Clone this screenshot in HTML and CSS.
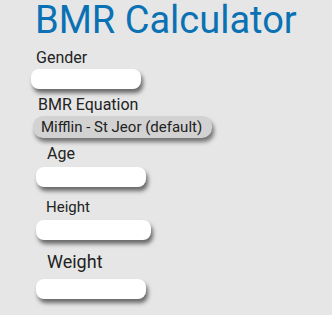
FILE: index.html
```html
<!DOCTYPE html>
<html>
<head>
<meta charset="utf-8">
<link rel="stylesheet" href="styles.css">
</head>
<body>
<div class="page">
  <h1 class="title">BMR Calculator</h1>
  <div class="field f-gender">
    <label class="lbl">Gender</label>
    <div class="box"></div>
  </div>
  <div class="field f-eq">
    <label class="lbl">BMR Equation</label>
    <div class="select">Mifflin - St Jeor (default)</div>
  </div>
  <div class="field f-age">
    <label class="lbl">Age</label>
    <div class="box"></div>
  </div>
  <div class="field f-height">
    <label class="lbl">Height</label>
    <div class="box"></div>
  </div>
  <div class="field f-weight">
    <label class="lbl">Weight</label>
    <div class="box"></div>
  </div>
</div>
</body>
</html>
```
FILE: styles.css
```css
html, body {
  margin: 0;
  padding: 0;
  background: #e6e6e6;
  font-family: Roboto, "Liberation Sans", sans-serif;
}
.page {
  width: 332px;
  height: 315px;
  overflow: hidden;
  display: flex;
  flex-direction: column;
  align-items: flex-start;
}
.title {
  margin: -2px 0 0 35px;
  font-size: 38px;
  font-weight: 400;
  color: #0a72b4;
  line-height: 44px;
}
.field {
  display: flex;
  flex-direction: column;
  align-items: flex-start;
}
.lbl {
  color: #222;
  font-size: 16px;
  line-height: 18px;
}
.box {
  width: 110px;
  height: 20px;
  background: #fff;
  border-radius: 8px;
  box-shadow: 2px 4px 4px rgba(0,0,0,0.55);
}
.select {
  height: 22px;
  padding: 0 10px 0 8px;
  background: #d2d2d2;
  border-radius: 10px;
  font-size: 15px;
  line-height: 22px;
  color: #222;
  box-shadow: 2px 4px 4px rgba(0,0,0,0.5);
}
.f-gender { margin: 7px 0 0 31px; }
.f-gender .lbl { margin-left: 5px; margin-bottom: 2px; }
.f-eq { margin: 7px 0 0 33px; }
.f-eq .lbl { margin-left: 5px; margin-bottom: 2px; }
.f-age { margin: 7px 0 0 36px; }
.f-age .lbl { margin-left: 11px; margin-bottom: 4px; }
.f-height { margin: 11px 0 0 36px; }
.f-height .lbl { margin-left: 10px; margin-bottom: 4px; font-size: 15px; }
.f-height .box { width: 115px; }
.f-weight { margin: 12px 0 0 36px; }
.f-weight .lbl { margin-left: 11px; margin-bottom: 7px; font-size: 18px; line-height: 20px; }
```
